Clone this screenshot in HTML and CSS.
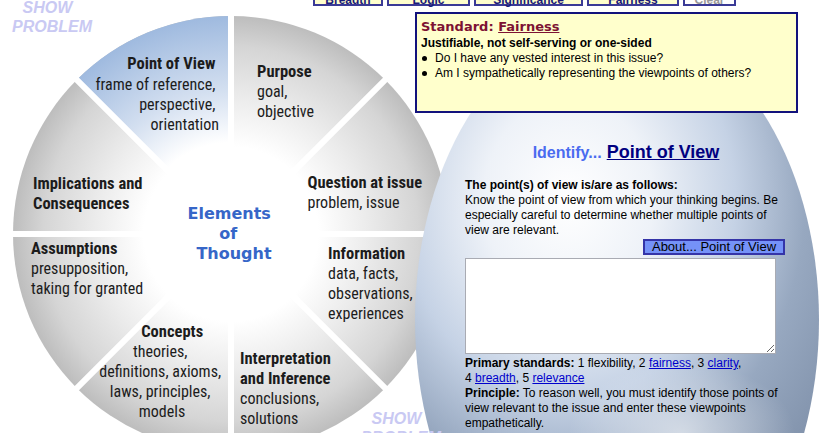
FILE: index.html
```html
<!DOCTYPE html>
<html lang="en">
<head>
    <meta charset="UTF-8">
    <meta name="viewport" content="width=device-width, initial-scale=1.0">
    <title>Elements of Thought</title>
    <link rel="stylesheet" href="styles.css">
</head>
<body>
    <div class="page">
        <div class="toolbar">
            <button class="tool tool-breadth">Breadth</button>
            <button class="tool tool-logic">Logic</button>
            <button class="tool tool-significance">Significance</button>
            <button class="tool tool-fairness">Fairness</button>
            <button class="tool tool-clear">Clear</button>
        </div>

        <div class="main">
            <div class="wheel-box">
                <svg class="wheel" width="460" height="427" viewBox="0 6 460 427">
                    <defs>
                        <radialGradient id="grayFill" cx="231" cy="234" r="218" gradientUnits="userSpaceOnUse">
                            <stop offset="0" stop-color="#ffffff"/>
                            <stop offset="0.4" stop-color="#ffffff"/>
                            <stop offset="0.62" stop-color="#ececec"/>
                            <stop offset="0.86" stop-color="#d5d5d5"/>
                            <stop offset="1" stop-color="#bdbdbd"/>
                        </radialGradient>
                        <radialGradient id="blueFill" cx="231" cy="234" r="218" gradientUnits="userSpaceOnUse">
                            <stop offset="0" stop-color="#ffffff"/>
                            <stop offset="0.42" stop-color="#ffffff"/>
                            <stop offset="0.66" stop-color="#d3dff0"/>
                            <stop offset="1" stop-color="#9fbadf"/>
                        </radialGradient>
                    </defs>

                    <circle cx="231" cy="234" r="218" fill="url(#grayFill)"/>
                    <path d="M231,234 L231,16 A218,218 0 0 0 76.85,79.85 Z" fill="url(#blueFill)"/>
                    <path class="gaps" d="M231,8 V460 M5,234 H457 M72.6,75.6 L389.4,392.4 M389.4,75.6 L72.6,392.4"/>

                    <!-- segment labels -->
                    <text class="seg" text-anchor="end">
                        <tspan class="seg-title" x="219" y="69">Point of View</tspan>
                        <tspan x="219" y="89.5">frame of reference,</tspan>
                        <tspan x="219" y="110">perspective,</tspan>
                        <tspan x="219" y="130">orientation</tspan>
                    </text>
                    <text class="seg">
                        <tspan class="seg-title" x="257" y="77">Purpose</tspan>
                        <tspan x="257" y="97">goal,</tspan>
                        <tspan x="257" y="117">objective</tspan>
                    </text>
                    <text class="seg">
                        <tspan class="seg-title" x="33" y="189">Implications and</tspan>
                        <tspan class="seg-title" x="33" y="209">Consequences</tspan>
                    </text>
                    <text class="seg">
                        <tspan class="seg-title" x="307.5" y="188">Question at issue</tspan>
                        <tspan x="307.5" y="208">problem, issue</tspan>
                    </text>
                    <text class="seg">
                        <tspan class="seg-title" x="31" y="254">Assumptions</tspan>
                        <tspan x="31" y="274">presupposition,</tspan>
                        <tspan x="31" y="294">taking for granted</tspan>
                    </text>
                    <text class="seg">
                        <tspan class="seg-title" x="328" y="259">Information</tspan>
                        <tspan x="328" y="279">data, facts,</tspan>
                        <tspan x="328" y="299">observations,</tspan>
                        <tspan x="328" y="319">experiences</tspan>
                    </text>
                    <text class="seg" text-anchor="middle">
                        <tspan class="seg-title" x="174" y="336.5">Concepts</tspan>
                        <tspan x="162" y="356.5">theories,</tspan>
                        <tspan x="162" y="376.5">definitions, axioms,</tspan>
                        <tspan x="162" y="396.5">laws, principles,</tspan>
                        <tspan x="162" y="416.5">models</tspan>
                    </text>
                    <text class="seg">
                        <tspan class="seg-title" x="240" y="364">Interpretation</tspan>
                        <tspan class="seg-title" x="240" y="383.5">and Inference</tspan>
                        <tspan x="240" y="403.5">conclusions,</tspan>
                        <tspan x="240" y="423.5">solutions</tspan>
                    </text>

                    <text class="hub" text-anchor="middle">
                        <tspan x="232" y="219">Elements</tspan>
                        <tspan x="231" y="239">of</tspan>
                        <tspan x="234" y="259">Thought</tspan>
                    </text>
                </svg>
            </div>

            <div class="side">
                <div class="standard">
                    <h3>Standard: <a href="#">Fairness</a></h3>
                    <div class="summary">Justifiable, not self-serving or one-sided</div>
                    <ul>
                        <li>Do I have any vested interest in this issue?</li>
                        <li>Am I sympathetically representing the viewpoints of others?</li>
                    </ul>
                </div>

                <div class="panel">
                    <h2 class="identify"><span class="lead">Identify...</span> <a href="#">Point of View</a></h2>
                    <div class="prompt">
                        <b>The point(s) of view is/are as follows:</b><br>
                        Know the point of view from which your thinking begins. Be especially careful to determine whether multiple points of view are relevant.
                    </div>
                    <div class="about-row">
                        <button class="about">About... Point of View</button>
                    </div>
                    <textarea class="answer"></textarea>
                    <div class="notes">
                        <b>Primary standards:</b> 1 flexibility, 2 <a href="#">fairness</a>, 3 <a href="#">clarity</a>,<br>
                        4 <a href="#">breadth</a>, 5 <a href="#">relevance</a><br>
                        <b>Principle:</b> To reason well, you must identify those points of view relevant to the issue and enter these viewpoints empathetically.
                    </div>
                </div>
            </div>
        </div>

        <a class="show-problem show-top" href="#"><span class="l1">SHOW</span>PROBLEM</a>
        <a class="show-problem show-bottom" href="#"><span class="l1">SHOW</span>PROBLEM</a>
    </div>
</body>
</html>
```

FILE: styles.css
```css
body {
    margin: 0;
    font-family: "Liberation Sans", Arial, sans-serif;
    font-size: 12px;
    color: #000;
    background: #fff;
}
.page {
    position: relative;
    width: 825px;
    height: 433px;
    overflow: hidden;
}

/* standards toolbar, mostly scrolled off the top */
.toolbar {
    display: flex;
    gap: 4px;
    height: 6px;
    padding-left: 313px;
}
.tool {
    height: 22px;
    margin-top: -16px;
    padding: 6px 0 0;
    border: 2px solid #3a3a96;
    background: #ffffcc;
    color: #1a1a7a;
    font-family: "Liberation Sans", Arial, sans-serif;
    font-size: 12px;
    font-weight: bold;
    line-height: 16px;
}
.tool-breadth { width: 70px; }
.tool-logic { width: 83px; }
.tool-significance { width: 109px; }
.tool-fairness { width: 92px; }
.tool-clear {
    width: 53px;
    background: #fff;
    color: #999;
}

.main {
    display: flex;
}
.wheel-box {
    flex: none;
    width: 415px;
    height: 427px;
}
.wheel {
    display: block;
    overflow: visible;
}
.gaps {
    stroke: #fff;
    stroke-width: 6;
    fill: none;
}
.seg {
    font-family: "Roboto Condensed", "Liberation Sans Narrow", Roboto, sans-serif;
    font-size: 16px;
    fill: #1c1c1c;
}
.seg-title {
    font-size: 16.5px;
    font-weight: bold;
}
.hub {
    font-family: "DejaVu Sans", Verdana, sans-serif;
    font-size: 16px;
    font-weight: bold;
    fill: #3666c8;
}

.side {
    position: relative;
    width: 410px;
}
.standard {
    position: relative;
    z-index: 2;
    margin-top: 6px;
    width: 383px;
    height: 101px;
    box-sizing: border-box;
    border: 2px solid #12127c;
    background: #ffffcc;
    padding: 4px 6px 0 4px;
}
.standard h3 {
    margin: 0;
    font-family: "DejaVu Sans", Verdana, sans-serif;
    font-size: 13px;
    line-height: 18px;
    color: #7d1233;
}
.standard h3 a {
    color: inherit;
}
.summary {
    font-weight: bold;
    line-height: 15px;
}
.standard ul {
    margin: 0;
    padding-left: 14px;
    line-height: 15px;
}
.standard li {
    position: relative;
    list-style: none;
}
.standard li::before {
    content: "";
    position: absolute;
    left: -13px;
    top: 5px;
    width: 5px;
    height: 5px;
    border-radius: 50%;
    background: #000;
}

.panel {
    width: 404px;
    height: 600px;
    margin-top: -93px;
    box-sizing: border-box;
    padding: 121px 32px 0 50px;
    border-radius: 50%;
    background:
        radial-gradient(ellipse 28% 12% at 66% 69%, rgba(255,255,255,0.55), rgba(255,255,255,0)),
        radial-gradient(ellipse 75% 60% at 38% 30%, #ffffff 0%, #eef2f8 28%, #c5d2e5 55%, #97a8c0 78%, #8495ae 100%);
}
.identify {
    margin: 0 0 14px;
    text-align: center;
    font-size: 18px;
    line-height: 22px;
    font-weight: bold;
}
.identify .lead {
    color: #4a6cf0;
    font-size: 16px;
}
.identify a {
    color: #000080;
}
.prompt {
    line-height: 15px;
}
.about-row {
    display: flex;
    justify-content: flex-end;
    padding-right: 2px;
    margin-top: 1px;
}
.about {
    width: 142px;
    height: 16px;
    padding: 0;
    border: 2px solid #3434a8;
    background: #7592f8;
    color: #000;
    font-family: "Liberation Sans", Arial, sans-serif;
    font-size: 13px;
    line-height: 12px;
}
.answer {
    display: block;
    width: 311px;
    height: 96px;
    margin-top: 3px;
    box-sizing: border-box;
    border: 1px solid #a9abb3;
    background: #fff;
}
.notes {
    margin-top: 2px;
    line-height: 15px;
}
.notes a {
    color: #0000cc;
}

.show-problem {
    position: absolute;
    z-index: 3;
    width: 80px;
    text-align: center;
    font-family: "Liberation Sans", Arial, sans-serif;
    font-size: 16px;
    line-height: 19px;
    font-style: italic;
    font-weight: bold;
    color: #c9c9f3;
    text-decoration: none;
}
.show-problem .l1 {
    display: block;
    padding-right: 9px;
}
.show-top {
    left: 12px;
    top: -2px;
}
.show-bottom {
    left: 361px;
    top: 409px;
}
```
